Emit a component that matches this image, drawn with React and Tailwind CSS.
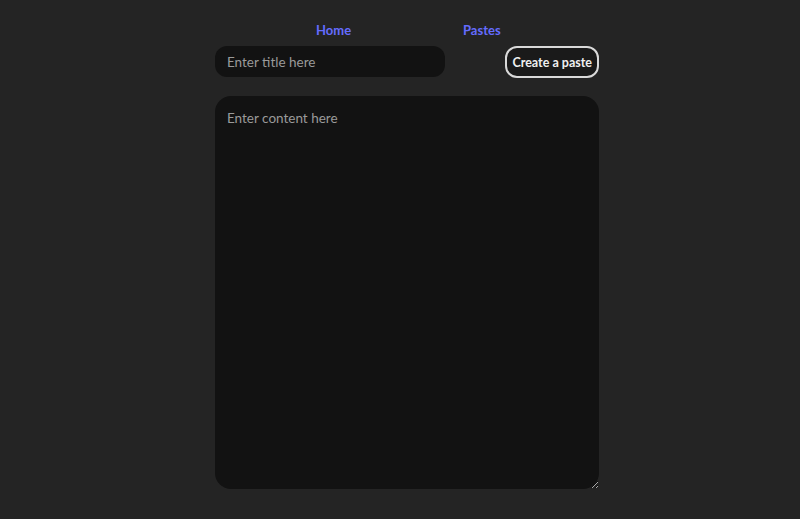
import { useState } from 'react'

export default function App() {
  const [title, setTitle] = useState('')
  const [content, setContent] = useState('')

  return (
    <div
      className="min-h-screen w-full bg-[#242424] text-[rgba(255,255,255,0.87)] flex justify-center pl-[14px]"
      style={{ fontFamily: 'Lato, "Noto Sans", sans-serif' }}
    >
      <div className="w-[384px] flex flex-col">
        <nav className="flex pl-[101px] pt-[22px] h-[46px]">
          <a href="#" className="w-[147px] text-[#646cff] text-[13px] font-bold leading-[17px]">Home</a>
          <a href="#" className="text-[#646cff] text-[13px] font-bold leading-[17px]">Pastes</a>
        </nav>
        <div className="flex justify-between items-start">
          <input
            value={title}
            onChange={(e) => setTitle(e.target.value)}
            placeholder="Enter title here"
            className="w-[230px] h-[31px] rounded-xl bg-[#121212] px-3 text-[13.5px] text-white placeholder:text-[#9a9a9a] outline-none"
          />
          <button className="h-[32px] px-[5px] pt-[2px] flex items-center rounded-xl border-2 border-[#d9d9d9] bg-[#1a1a1a] text-[12.5px] leading-none font-bold text-[#f0f0f0] whitespace-nowrap">
            Create a paste
          </button>
        </div>
        <textarea
          value={content}
          onChange={(e) => setContent(e.target.value)}
          placeholder="Enter content here"
          className="mt-[18px] h-[393px] w-full rounded-2xl bg-[#121212] px-3 py-[12px] text-[13.5px] text-white placeholder:text-[#9a9a9a] outline-none"
        />
      </div>
    </div>
  )
}
